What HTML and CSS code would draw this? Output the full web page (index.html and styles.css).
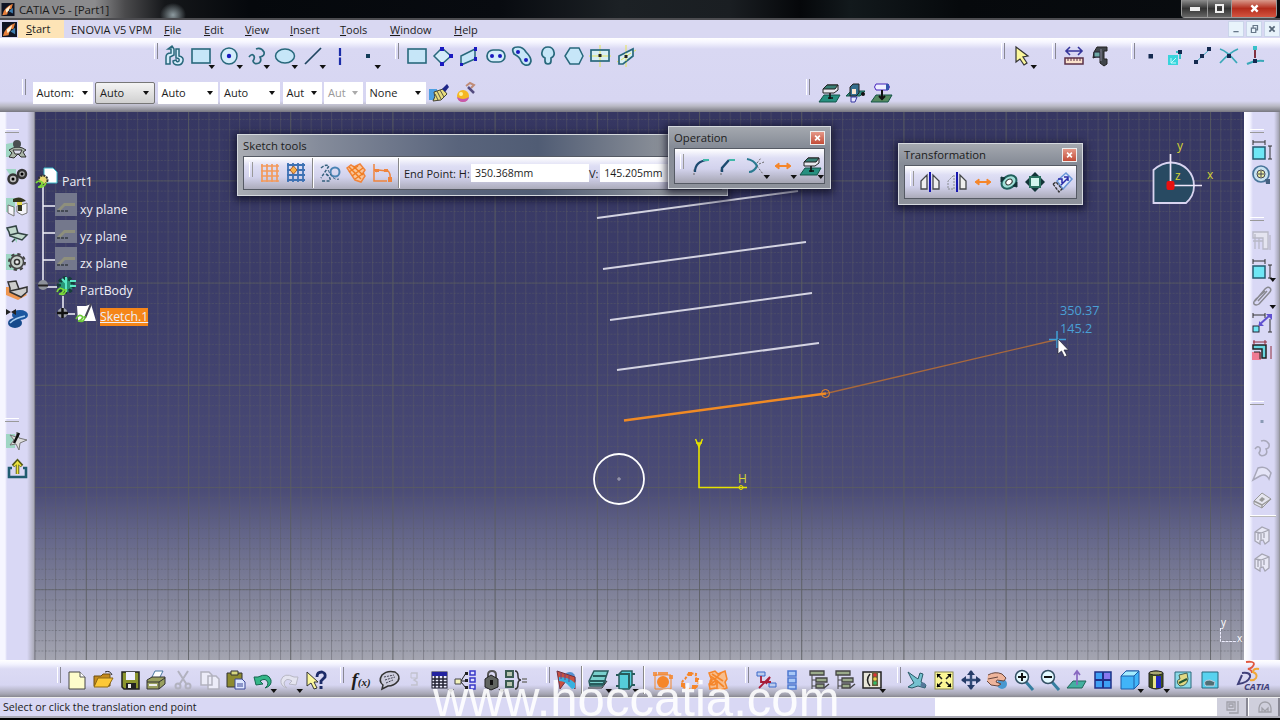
FILE: index.html
```html
<!DOCTYPE html>
<html>
<head>
  <meta charset="utf-8">
  <title>CATIA V5 - [Part1]</title>
  <link rel="stylesheet" href="styles.css">
</head>
<body>

  <!-- shared icons -->
  <svg class="defs" width="0" height="0">
    <defs>
      <path id="drop" d="M19.5 21h6.5l-3.2 4z" fill="#111"/>
      <g id="catia"><rect width="16" height="16" fill="#101524"/><path d="M1 15Q3 5 14 1L12 8Q9 5 7 14z" fill="#e8803a"/><path d="M5 8L11 3l-2 6-3 3z" fill="#fff3da"/><path d="M9 10l5-4v7z" fill="#3e7eb0"/></g>
      <g id="gear"><circle cx="12" cy="12" r="8" fill="none" stroke="#444" stroke-width="2" stroke-dasharray="3.300 3"/><circle cx="12" cy="12" r="6.500" fill="#c8d0cc" stroke="#444" stroke-width="1.500"/><circle cx="12" cy="12" r="2.500" fill="#eee" stroke="#333" stroke-width="1.500"/></g>
      <g id="cutplane"><path d="M2 21L7 14h16l-4 7z" fill="#279080" stroke="#145548"/><path d="M6 8l4-4h11v5l-4 3H6z" fill="#e8e8ee" stroke="#222"/><path d="M6 8l4-4h11l-3 4z" fill="#397f75" stroke="#222"/><path d="M13 12v6m-2-1h5" stroke="#111" stroke-width="1.6"/></g>
      <g id="dim"><rect x="3" y="9" width="12" height="12" fill="#6ee6f5" stroke="#265b70" stroke-width="1.500"/><path d="M3 4h12M3 2v5M15 2v5M20 8v13M18 8h4M18 21h4" stroke="#333" fill="none"/></g>
      <g id="mirror"><path d="M9 5v14H3v-8zM15 5v14h6v-8z" fill="#eee" stroke="#44474a" stroke-width="1.3"/><path d="M12 2v20" stroke="#1818b0" stroke-width="2"/></g>
      <g id="move" fill="#f5862a" stroke="#f5862a"><path d="M5 12h14" stroke-width="2"/><path d="M4 12l4-3v6zM20 12l-4-3v6z"/></g>
      <g id="solid" fill="#e8e8f5" stroke="#a5a5b2" stroke-width="1.3"><path d="M5 9l7-5 7 3v11l-4 3-2-4-3 1v3l-5-3z"/><path d="M8 10v7M11 11v6M14 10v5M5 9l6 1 8-3" fill="none"/></g>
      <g id="tree" fill="none" stroke="#444"><path d="M5 4v17M5 12h6M5 18h6"/><path d="M3 3h14v4H3zM9 10h11v4H9zM9 16h8v4H9z" fill="#9aaa8a" stroke-width="1.300"/><path d="M17 20l5-4" stroke-width="1.500"/></g>
    </defs>
  </svg>

  <div class="app">

    <div class="titlebar">
      <svg class="logo" viewBox="0 0 16 16"><use href="#catia"/></svg>
      <span class="caption">CATIA V5 - [Part1]</span>
      <div class="winbtns">
        <b class="min"><i></i></b><b class="max"><i></i></b>
        <b class="close"><svg viewBox="0 0 10 10"><path d="M1.500 1.500l7 7M8.500 1.500l-7 7" stroke="#fff" stroke-width="2.600"/></svg></b>
      </div>
    </div>

    <div class="menubar">
      <svg class="logo" viewBox="0 0 16 16"><use href="#catia"/></svg>
      <span class="start"><u>S</u>tart</span>
      <span class="m-enovia">ENOVIA V5 VPM</span>
      <span class="m-file"><u>F</u>ile</span>
      <span class="m-edit"><u>E</u>dit</span>
      <span class="m-view"><u>V</u>iew</span>
      <span class="m-insert"><u>I</u>nsert</span>
      <span class="m-tools"><u>T</u>ools</span>
      <span class="m-window"><u>W</u>indow</span>
      <span class="m-help"><u>H</u>elp</span>
      <div class="docbtns">
        <svg viewBox="0 0 16 16"><path d="M5 11h6" stroke="#678" stroke-width="1.5"/></svg>
        <svg viewBox="0 0 16 16"><path d="M5 7h5v5H5zM7 7V4h5v5h-2" fill="none" stroke="#678" stroke-width="1.4"/></svg>
        <svg viewBox="0 0 16 16"><path d="M5 5l6 6M11 5l-6 6" stroke="#567" stroke-width="2"/></svg>
      </div>
    </div>

    <div class="toolbars">
      <div class="row row1">
        <div class="group profile">
          <svg viewBox="0 0 24 24"><path d="M4 20v-7q0-4 5-4V5H6l4-3 2 3v6l-4 2v7zM14 5h3v7q5 1 4 5-1 4-5 4-5 0-5-4l3-1q1 3 3 1 1-3-3-3z" fill="#d4ecfa" stroke="#28687c" stroke-width="1.500"/></svg>
          <svg viewBox="0 0 24 24"><rect x="3" y="5" width="18" height="14" fill="#c6e6f8" stroke="#28687c" stroke-width="1.6"/><use href="#drop"/></svg>
          <svg viewBox="0 0 24 24"><circle cx="12" cy="12" r="8" fill="#d4ecfa" stroke="#28687c" stroke-width="1.5"/><circle cx="12" cy="12" r="2.200" fill="#1a1ac0"/><use href="#drop"/></svg>
          <svg viewBox="0 0 24 24"><path d="M5 13q3-4 5-1 1 2-1 5 1 4 6 2 3-2 1-6 5-1 4-5-3-5-8-3" fill="none" stroke="#28687c" stroke-width="1.700"/><use href="#drop"/></svg>
          <svg viewBox="0 0 24 24"><ellipse cx="13" cy="12" rx="9.500" ry="7" fill="#c6e6f8" stroke="#28687c" stroke-width="1.5"/><use href="#drop"/></svg>
          <svg viewBox="0 0 24 24"><path d="M5 20L21 4" stroke="#1f4560" stroke-width="1.7"/><use href="#drop"/></svg>
          <svg viewBox="0 0 24 24"><path d="M13 4v17" stroke="#1c2da8" stroke-width="2.200" stroke-dasharray="8 1.500"/></svg>
          <svg viewBox="0 0 24 24"><rect x="11" y="10" width="4" height="4" fill="#123c58"/><use href="#drop"/></svg>
        </div>
        <div class="group shapes">
          <svg viewBox="0 0 24 24"><rect x="3" y="5" width="18" height="14" fill="#c6e6f8" stroke="#28687c" stroke-width="1.600"/></svg>
          <svg viewBox="0 0 24 24"><path d="M11 4l9 8-9 8-8-8z" fill="#d4ecfa" stroke="#28687c" stroke-width="1.500"/><path d="M9 3h4v4H9zM18 10h4v4h-4zM9 18h4v4H9z" fill="#1a1ac0"/></svg>
          <svg viewBox="0 0 24 24"><path d="M4 12l14-7v10L4 21z" fill="#c6e6f8" stroke="#28687c" stroke-width="1.500"/><path d="M17 3h3v4h-3zM17 13h3v4h-3zM3 19h3v3H3z" fill="#1a1ac0"/></svg>
          <svg viewBox="0 0 24 24"><rect x="3" y="6" width="18" height="12" rx="6" fill="#d4ecfa" stroke="#28687c" stroke-width="1.700"/><circle cx="8" cy="12" r="2" fill="#1a1ac0"/><circle cx="16" cy="12" r="2" fill="#1a1ac0"/></svg>
          <svg viewBox="0 0 24 24"><path d="M4 10Q0 3 8 3q5 0 8 5 5 5 5 9-1 5-6 4-3-1-4-4-1-4-7-7z" fill="#c6e6f8" stroke="#28687c" stroke-width="1.700"/><circle cx="8" cy="8" r="2" fill="#1a1ac0"/><circle cx="16" cy="16" r="2" fill="#1a1ac0"/></svg>
          <svg viewBox="0 0 24 24"><path d="M9 14Q5 12 6 8q1-5 6-5t6 5q1 4-3 6v3q0 3-3 3t-3-3z" fill="#c6e6f8" stroke="#28687c" stroke-width="1.700"/></svg>
          <svg viewBox="0 0 24 24"><path d="M8 4h9l4 8-4 8H8l-5-8z" fill="#c6e6f8" stroke="#28687c" stroke-width="1.500"/></svg>
          <svg viewBox="0 0 24 24"><path d="M12 1v22M1 12h22" stroke="#e4e458"/><rect x="3" y="6" width="18" height="11" fill="#d8eef4" stroke="#28687c" stroke-width="1.700"/><path d="M12 7v9M4 12h16" stroke="#e4e458"/><rect x="10.500" y="10" width="3" height="3" fill="#222"/></svg>
          <svg viewBox="0 0 24 24"><path d="M12 1v22M3 18L22 6" stroke="#e4e458"/><path d="M5 12l14-7v7L9 20H5z" fill="#d8eef4" stroke="#28687c" stroke-width="1.700"/><path d="M12 9v8M7 16l10-7" stroke="#e4e458"/><rect x="10.500" y="11" width="3" height="3" fill="#222"/></svg>
        </div>
        <div class="group select-tool">
          <svg viewBox="0 0 24 24"><path d="M5 3v15l4-3 4 6 3-2-4-6 5-1z" fill="#fbf79c" stroke="#333" stroke-width="1.200"/><use href="#drop"/></svg>
        </div>
        <div class="group measure">
          <svg viewBox="0 0 24 24"><path d="M4 7h16M8 3L4 7l4 4M16 3l4 4-4 4" fill="none" stroke="#35359a" stroke-width="1.600"/><rect x="3" y="14" width="18" height="6" fill="#fae2cc" stroke="#5a3048" stroke-width="1.500"/><path d="M6 14v3M9 14v3M12 14v3M15 14v3M18 14v3" stroke="#5a3048"/></svg>
          <svg viewBox="0 0 24 24"><path d="M8 3h10v4h-3v8h3v5l-3 2-4-3v-6H7l-3 1 1-6z" fill="#40454a" stroke="#222"/><path d="M5 8h6v5H5z" fill="#6da7a5" stroke="#223"/><path d="M12 5v12" stroke="#889"/></svg>
        </div>
        <div class="group points">
          <svg viewBox="0 0 24 24"><rect x="9.500" y="10" width="4.500" height="4.500" fill="#142a50"/></svg>
          <svg viewBox="0 0 24 24"><rect x="3" y="11" width="10" height="10" fill="#38d4dc"/><path d="M6 14v5h5M6 19l5-5" stroke="#c4fcfc" fill="none"/><path d="M11 8h4v7" stroke="#38bfc8" fill="none" stroke-width="2"/><rect x="13" y="6" width="4" height="4" fill="#142a50"/></svg>
          <svg viewBox="0 0 24 24"><path d="M4 19L19 5" stroke="#38a8c0"/><path d="M3 16h4v4H3zM9 10h4v4H9zM16 3h4v4h-4z" fill="#142a50"/></svg>
          <svg viewBox="0 0 24 24"><path d="M3 5q7 2 17 14M21 5Q13 8 3 19" fill="none" stroke="#38a8b8" stroke-width="1.700"/><rect x="10" y="10" width="4" height="4" fill="#142a50"/></svg>
          <svg viewBox="0 0 24 24"><path d="M12 5v9" stroke="#803040" stroke-width="2"/><path d="M4 20q8-4 17-3" fill="none" stroke="#38a8b8" stroke-width="2"/><rect x="10" y="2" width="4" height="4" fill="#38c0c8"/><rect x="10" y="15" width="4" height="4" fill="#142a50"/></svg>
        </div>
      </div>

      <div class="row row2">
        <div class="group graphic">
          <div class="combo wide auto"><span>Autom:</span></div>
          <div class="combo wide focus"><span>Auto</span></div>
          <div class="combo wide"><span>Auto</span></div>
          <div class="combo wide"><span>Auto</span></div>
          <div class="combo narrow"><span>Aut</span></div>
          <div class="combo narrow disabled"><span>Aut</span></div>
          <div class="combo wide none"><span>None</span></div>
          <svg viewBox="0 0 24 24"><path d="M2 8h8v11H2z" fill="#4d9fe2"/><path d="M6 20q3-4 1-9l9-3 4 5-6 6z" fill="#e6db7c" stroke="#443"/><path d="M10 10l4 8M13 9l4 7M8 13l3 6" stroke="#554"/><path d="M15 8l5-5 2 3-4 5z" fill="#1e2688"/></svg>
          <svg viewBox="0 0 24 24"><circle cx="9" cy="15" r="6" fill="#f5b722"/><path d="M3 16q6 4 12 0-1 5-6 5t-6-5z" fill="#c557b0"/><circle cx="7" cy="13" r="2" fill="#fff2a0"/><path d="M12 5l4-3 4 2-3 3" fill="none" stroke="#c08c78" stroke-width="2"/><path d="M14 6l6 6" fill="none" stroke="#544c80" stroke-width="2.500"/></svg>
        </div>
        <div class="group cut">
          <svg viewBox="0 0 24 24"><use href="#cutplane"/></svg>
          <svg viewBox="0 0 24 24"><path d="M3 15l5-5h14l-5 5z" fill="#2f8a80" stroke="#145548"/><path d="M7 6l3-3h6v9l-3 3H7z" fill="#346e8c" stroke="#222"/><path d="M9 8h4v5H9z" fill="#f9e5d0"/><path d="M8 16v5h4l2-5z" fill="#e5e5ff" stroke="#3434a0"/><circle cx="20" cy="13" r="2" fill="#111"/></svg>
          <svg viewBox="0 0 24 24"><path d="M2 21l5-7h16l-4 7z" fill="#558a60" stroke="#145548"/><path d="M7 3h12q3 3 0 6H7Q4 6 7 3z" fill="#eef" stroke="#42b"/><path d="M17 3h3v6h-3z" fill="#35a"/><path d="M13 9v9M10 15l3 3 3-3" stroke="#111" fill="none" stroke-width="2"/></svg>
        </div>
      </div>
    </div>

    <div class="main">
      <div class="side left">
        <div class="vgroup left-a">
          <svg viewBox="0 0 24 24"><path d="M1 7l10-2v15H1z" fill="#9fd6c4"/><path d="M4 13q9-6 17 0l-3 2 3 5h-5l-3-3-4 4-5-1 3-4z" fill="#aab5a8" stroke="#333"/><circle cx="12" cy="7" r="4" fill="#4a4f50"/><path d="M8 13h9l-2 4h-5z" fill="#dde" stroke="#333"/></svg>
          <svg viewBox="0 0 24 24"><path d="M1 4h10v15z" fill="#9fd6c4"/><circle cx="8" cy="14" r="4.500" fill="#bbb" stroke="#333" stroke-width="2.500"/><circle cx="17" cy="9" r="4" fill="#aaa" stroke="#333" stroke-width="2.500"/><circle cx="8" cy="14" r="1.500"/><circle cx="17" cy="9" r="1.500"/></svg>
          <svg viewBox="0 0 24 24"><path d="M1 4h9v14H1z" fill="#9fd6c4"/><path d="M3 11l6 2v9l-6-3zM12 12l10-3v10l-5 2-5-3z" fill="#f3f3f8" stroke="#777"/><path d="M8 5q7-4 13 2l-4 1v9h-4V8L8 8z" fill="#33351f"/><path d="M12 8h5v3h-5z" fill="#e4d850"/></svg>
          <svg viewBox="0 0 24 24"><path d="M1 7h11v14z" fill="#9fd6c4"/><path d="M2 6l9-2 2 7 9 2-5 5-12-4-1-4z" fill="#c0d8cc" stroke="#344" stroke-width="1.500"/><path d="M5 13l8-2M10 17l-3 3" stroke="#344" stroke-width="1.500"/></svg>
          <svg viewBox="0 0 24 24"><path d="M1 4h12v16H1z" fill="#9fd6c4"/><use href="#gear"/></svg>
          <svg viewBox="0 0 24 24"><path d="M1 9h12l9 8-9 5L1 17z" fill="#ee9650"/><path d="M3 4l8-1 3 8 8-2v5l-6 5-11-5v-4z" fill="#ccc" stroke="#333" stroke-width="1.500"/><path d="M5 13l9-2" stroke="#333" stroke-width="1.500"/></svg>
          <svg viewBox="0 0 24 24"><ellipse cx="15" cy="9" rx="8" ry="5" fill="#1b57a0"/><ellipse cx="10" cy="17" rx="7" ry="5" fill="#164a8c"/><path d="M5 17q5-5 15-7" stroke="#a7cdf0" fill="none" stroke-width="1.500"/><path d="M1 3v6l5-3zM11 3v6L6 6z" fill="#222"/></svg>
        </div>
        <div class="vgroup left-b">
          <svg viewBox="0 0 24 24"><path d="M1 5h9v14H1z" fill="#9fd6c4"/><path d="M12 3l2 6 8 2-7 3-1 7-3-6-6 1 4-5-4-5 6 2z" fill="#ddd" stroke="#777"/><path d="M9 14l5-10" stroke="#111" stroke-width="2.500"/></svg>
          <svg viewBox="0 0 24 24"><path d="M7 11H4v9h17v-9h-3" fill="none" stroke="#205c70" stroke-width="2.600"/><path d="M12.500 17V6M8 9l4.500-5L17 9" fill="none" stroke="#555a18" stroke-width="3.500"/><path d="M12.500 17V6M9 9l3.500-4L16 9" fill="none" stroke="#eee33e" stroke-width="1.700"/></svg>
        </div>
      </div>

      <div class="viewport">
        <svg class="scene" viewBox="35 112 1209 548">
          <defs>
            <pattern id="minor" x="699" y="487" width="10.220" height="10.220" patternUnits="userSpaceOnUse">
              <path d="M0 0.500h10.220" stroke="#5a5c64" stroke-dasharray="2 1.400" stroke-opacity=".5"/>
              <path d="M0.500 0v10.220" stroke="#5a5c64" stroke-opacity=".45"/>
            </pattern>
            <pattern id="major" x="699" y="487" width="102.200" height="102.200" patternUnits="userSpaceOnUse">
              <path d="M0 0.500h102.200M0.500 0v102.200" stroke="#595d5e" stroke-opacity=".65"/>
            </pattern>
          </defs>
          <rect x="35" y="112" width="1209" height="548" fill="url(#minor)"/>
          <rect x="35" y="112" width="1209" height="548" fill="url(#major)"/>

          <!-- sketch geometry -->
          <path d="M597 218L798 191M603 269L806 242M610 320L812 293M617 370L819 343" stroke="#d4d4e2" stroke-width="2"/>
          <path d="M624 420.500L826 393.500" stroke="#f08a24" stroke-width="2.400"/>
          <path d="M826 393.500L1057 339.500" stroke="#a8683c" stroke-width="1.300"/>
          <circle cx="825.500" cy="393.500" r="4" fill="none" stroke="#f08a24"/>
          <circle cx="619" cy="479" r="25" fill="none" stroke="#fff" stroke-width="1.800"/>
          <path d="M617 479h4M619 477v4" stroke="#aab"/>

          <!-- H / V axes -->
          <g stroke="#e6e200" fill="none">
            <path d="M699 443V487.500H747" stroke-width="1.600"/>
            <path d="M695.500 439l3.500 8 3.500-8M696 443h6" stroke-width="1.500"/>
            <circle cx="741" cy="487.500" r="2"/>
          </g>
          <text class="axis" x="738" y="483">H</text>

          <!-- cursor and point value -->
          <text class="coord" x="1060" y="315">350.37</text>
          <text class="coord" x="1060" y="333">145.2</text>
          <path d="M1057 331v17M1049 339.500h17" stroke="#3fa0d8" stroke-width="1.500"/>
          <path d="M1058 339v15l3.500-3 3 6 2.500-1.500-3-5.500h4.500z" fill="#fff" stroke="#223" stroke-width=".7"/>

          <!-- compass -->
          <path d="M1153.500 203V170Q1162 162.500 1171 162.500A23 23 0 0 1 1194 186Q1194 196 1186 203z" fill="#284a62" stroke="#d9d4f0" stroke-width="1.800"/>
          <path d="M1170.500 154v31.500H1202" stroke="#efe6fa" stroke-width="1.700" fill="none"/>
          <rect x="1166.500" y="181" width="8" height="9" rx="2" fill="#e81010"/>
          <text class="axis" x="1177" y="150">y</text>
          <text class="axis" x="1175" y="180">z</text>
          <text class="axis" x="1207" y="179">x</text>

          <path d="M1220.500 628V641.500H1236" stroke="#eef" fill="none" stroke-dasharray="3 .7"/>
          <text class="corner" x="1221" y="626">y</text>
          <text class="corner" x="1237" y="642">x</text>

          <!-- specification tree lines and nodes -->
          <path d="M43 185V284M43 206h12M43 233h12M43 260h12M43 287h14M63 296v17M63 314h12" stroke="#f2f2fa" stroke-width="1.500" fill="none"/>
          <path d="M44 168h9l4 4v11H44z" fill="#fff" stroke="#38b8c8"/>
          <circle cx="43" cy="180" r="4.500" fill="#e8d870" stroke="#333" stroke-width="2" stroke-dasharray="2 1"/>
          <path d="M36 183q3-4 7 0-3 4-5 4 6 1 8-4" fill="none" stroke="#7cdb38" stroke-width="1.700"/>
          <g id="plane"><rect x="55" y="193" width="22" height="23" fill="#74788c"/><path d="M57 210l7-7h11v3H65l-5 5z" fill="#8e8f7c"/><path d="M57 211h12" stroke="#444a54" stroke-width="2" stroke-dasharray="3 1"/></g>
          <use href="#plane" y="27"/>
          <use href="#plane" y="54"/>
          <circle cx="43" cy="285" r="5" fill="#8d929b"/><path d="M38 285.500h10" stroke="#222" stroke-width="2"/>
          <circle cx="66" cy="285" r="7" fill="#299778" stroke="#153e38" stroke-width="4" stroke-dasharray="3 2"/>
          <path d="M66 277v15M70 281h6M70 286h6M62 279l4 4" stroke="#5be8c6" stroke-width="2"/>
          <path d="M57 292q2-6 7-2-2 4-5 4 7 2 7-5" fill="none" stroke="#7cdb38" stroke-width="1.700"/>
          <circle cx="62.500" cy="313" r="5" fill="#9b9fa8"/><path d="M57 313h11M62.500 308v10" stroke="#111" stroke-width="2.500"/>
          <path d="M77 306h9l5-2 5 17H78z" fill="#fff"/><path d="M85 318l6-14" stroke="#445" stroke-width="2"/>
          <path d="M76 319q3-6 7-2-2 4-5 4 7 2 7-5" fill="none" stroke="#6bc738" stroke-width="1.700"/>
        </svg>

        <ul class="spectree">
          <li class="part">Part1</li>
          <li>xy plane</li>
          <li>yz plane</li>
          <li>zx plane</li>
          <li>PartBody</li>
          <li class="sketch"><span>Sketch.1</span></li>
        </ul>

        <div class="float sketchtools">
          <div class="float-title">Sketch tools</div>
          <div class="float-body">
            <svg viewBox="0 0 24 24"><path d="M4 3v18M9 3v18M14 3v18M19 3v18M3 5h18M3 10h18M3 15h18M3 20h18" stroke="#f39a5c" stroke-width="1.700"/></svg>
            <svg viewBox="0 0 24 24"><path d="M4 2v19M9 2v19M14 2v19M19 2v19M3 4h18M3 9h18M3 14h18M3 19h18" stroke="#3e72b4" stroke-width="1.800"/><path d="M9.500 5l3.500 4-3.500 4L6 9z" fill="#f3b04a" stroke="#b0602c"/></svg>
            <i class="sep"></i>
            <svg viewBox="0 0 24 24"><path d="M3 7q4-4 8-2L3 17M8 13q5 3 4 7l-8 0" fill="none" stroke="#34607c" stroke-width="1.500" stroke-dasharray="3 1.500"/><circle cx="17" cy="11" r="4.500" fill="none" stroke="#4a84b4" stroke-width="2"/><path d="M10 9q5 11 11 9" fill="none" stroke="#34607c" stroke-dasharray="3 1.500"/></svg>
            <svg viewBox="0 0 24 24"><path d="M3 7l4-3 3 2 6-3 5 6-2 3 2 3-4 6-6-2z" fill="#f9c59a" stroke="#f0843c" stroke-width="1.500"/><path d="M5 6l12 12M9 5l10 9M5 11l9-6M8 15l11-8M11 18l9-6" stroke="#f07c20" stroke-width="1.500"/></svg>
            <svg viewBox="0 0 24 24"><path d="M4 3v5l3 3M4 8v12h13M8 9l9 1M17 9q4 3 3 9" fill="none" stroke="#f0843c" stroke-width="1.500"/><path d="M5 8h4v3H5zM14 8h4v3h-4zM18 16h4v5h-4z" fill="#f0843c"/></svg>
            <i class="sep"></i>
            <label>End Point: H:</label>
            <span class="field">350.368mm</span>
            <label>V:</label>
            <span class="field last">145.205mm</span>
          </div>
        </div>

        <div class="float operation">
          <div class="float-title">Operation<b><svg viewBox="0 0 10 10"><path d="M2 2l6 6M8 2L2 8" stroke="#fff" stroke-width="2"/></svg></b></div>
          <div class="float-body">
            <svg viewBox="0 0 24 24"><path d="M4 21V15" stroke="#666" stroke-dasharray="2 1.500"/><path d="M5 18Q5 7 18 6" fill="none" stroke="#1c4a70" stroke-width="2.200"/><path d="M13 6h6" stroke="#40b8a8" stroke-width="2"/></svg>
            <svg viewBox="0 0 24 24"><path d="M4 21V15" stroke="#666" stroke-dasharray="2 1.500"/><path d="M5 18v-4l7-8" fill="none" stroke="#1c4a70" stroke-width="2.400"/><path d="M12 6h6" stroke="#40b8a8" stroke-width="2"/></svg>
            <svg viewBox="0 0 24 24"><path d="M3 5q7 1 10 7-3 6-8 6" fill="none" stroke="#2a7a90" stroke-width="2.200"/><path d="M13 9l4-5M13 12l6 8M15 10l5-2" stroke="#666" stroke-dasharray="2 1.500"/><use href="#drop"/></svg>
            <svg viewBox="0 0 24 24"><use href="#move"/><use href="#drop"/></svg>
            <svg viewBox="0 0 24 24"><use href="#cutplane"/><use href="#drop"/></svg>
          </div>
        </div>

        <div class="float transformation">
          <div class="float-title">Transformation<b><svg viewBox="0 0 10 10"><path d="M2 2l6 6M8 2L2 8" stroke="#fff" stroke-width="2"/></svg></b></div>
          <div class="float-body">
            <svg viewBox="0 0 24 24"><use href="#mirror"/></svg>
            <svg viewBox="0 0 24 24"><path d="M9 5v14H3v-8z" fill="none" stroke="#888c90" stroke-dasharray="2 1"/><path d="M15 5v14h6v-8z" fill="#eee" stroke="#44474a" stroke-width="1.300"/><path d="M12 2v20" stroke="#1818b0" stroke-width="2"/></svg>
            <svg viewBox="0 0 24 24"><use href="#move"/></svg>
            <svg viewBox="0 0 24 24"><ellipse cx="12" cy="12" rx="8" ry="6" fill="#a0e0d8" stroke="#20605c" stroke-width="2" transform="rotate(-35 12 12)"/><path d="M4 12V7l4 1zM20 12v5l-4-1z" fill="#123438" stroke="#123438"/><ellipse cx="12" cy="12" rx="3.500" ry="2.500" fill="#fff" stroke="#333" transform="rotate(-35 12 12)"/></svg>
            <svg viewBox="0 0 24 24"><rect x="7" y="7" width="10" height="10" fill="#d2f5ee" stroke="#2a7060" stroke-width="2"/><path d="M12 2l4 4H8zM12 22l4-4H8zM2 12l4-4v8zM22 12l-4-4v8z" fill="#123438"/></svg>
            <svg viewBox="0 0 24 24"><path d="M7 11L16 3l6 6-9 10z" fill="#e0e8fa" stroke="#6a96d8" stroke-width="1.500"/><path d="M3 14l3-2 6 7-3 3z" fill="none" stroke="#333" stroke-width="1.300" stroke-dasharray="3 1"/><path d="M8 9h4v4M14 7h4v4M11 15l7-7" stroke="#2a2aa8" stroke-width="1.500" fill="none"/></svg>
          </div>
        </div>
      </div>

      <div class="side right">
        <div class="vgroup right-a">
          <svg viewBox="0 0 24 24"><use href="#dim"/></svg>
          <svg viewBox="0 0 24 24"><circle cx="11" cy="11" r="8" fill="#c8e2f0" stroke="#49759a" stroke-width="1.700"/><circle cx="11" cy="11" r="4" fill="#e8eda0" stroke="#445"/><path d="M11 8v6M8 11h6" stroke="#445"/><path d="M15 16h5v5h-4z" fill="#446080"/></svg>
        </div>
        <div class="vgroup right-b">
          <svg viewBox="0 0 24 24"><path d="M3 3h15v17h-5V9H3zM3 12h10M5 5v15M9 9v11M20 6v15" fill="#e4e4f0" stroke="#b8b8c6" stroke-width="1.300"/></svg>
          <svg viewBox="0 0 24 24"><use href="#dim"/><use href="#drop"/></svg>
          <svg viewBox="0 0 24 24"><path d="M5 17L15 5q3-3 5-1 2 2-1 5L9 20q-3 2-5 0-1-2 2-5L15 7M8 17l9-10" fill="none" stroke="#888890" stroke-width="1.500"/><use href="#drop"/></svg>
          <svg viewBox="0 0 24 24"><path d="M3 4h12M3 2v5M15 2v5M20 8v13M18 21h4" stroke="#333"/><rect x="3" y="15" width="6" height="6" fill="#6ee6f5" stroke="#223"/><path d="M9 14l10-9" stroke="#6050d0" stroke-width="2" fill="none"/><path d="M16 3h6v6zM9 15v-5l5 5z" fill="#6050d0"/></svg>
          <svg viewBox="0 0 24 24"><path d="M3 7h13v13h-4v-9H3z" fill="#68d8e0" stroke="#222" stroke-width="1.500"/><path d="M3 4h14M4 2v5M15 2v5M21 8v13" stroke="#902c3c"/><path d="M2 14h9v8H2z" fill="#ef7c94"/><path d="M4 14h6v7" fill="none" stroke="#222"/></svg>
        </div>
        <div class="vgroup right-c">
          <svg viewBox="0 0 24 24"><rect x="10.500" y="10" width="3" height="3" fill="#8a9ab4"/></svg>
          <svg viewBox="0 0 24 24"><path d="M5 13q3-4 5-1 1 2-1 5 1 4 6 2 3-2 1-6 4-1 3-5-3-5-8-3" fill="none" stroke="#a8a8ba" stroke-width="1.500"/></svg>
          <svg viewBox="0 0 24 24"><path d="M3 18L8 6q8-3 13 5l-2 6q-3-6-9-3z" fill="#e5e5f7" stroke="#a8a8ba" stroke-width="1.500"/></svg>
          <svg viewBox="0 0 24 24"><path d="M4 12l8-8 9 6-9 9-8-4z" fill="#e5e5ef" stroke="#999"/><path d="M12 19v-3l-8-4M12 16l9-6" stroke="#999" stroke-width="1.500" fill="none"/><path d="M12 8l3 2-3 3-3-2z" fill="#999"/></svg>
          <i class="hsep"></i>
          <svg viewBox="0 0 24 24"><use href="#solid"/></svg>
          <svg viewBox="0 0 24 24"><use href="#solid"/></svg>
        </div>
      </div>
    </div>

    <div class="bottombar">
      <div class="group standard">
        <svg viewBox="0 0 24 24"><path d="M4 4h11l5 5v12H4z" fill="#fdfccb" stroke="#444"/><path d="M15 4v5h5" fill="#fff" stroke="#555"/></svg>
        <svg viewBox="0 0 24 24"><path d="M3 8h7l2-2h7v12H3z" fill="#c48a1c" stroke="#6d4c10"/><path d="M3 19l4-9h15l-5 9z" fill="#fcc838" stroke="#8d6814"/><path d="M14 4q5-2 7 3" fill="none" stroke="#222"/></svg>
        <svg viewBox="0 0 24 24"><path d="M4 4h17v17H6l-2-2z" fill="#8b942e" stroke="#222" stroke-width="1.500"/><path d="M8 4h9v8H8z" fill="#eef"/><path d="M8 15h10v6H8z" fill="#222"/><path d="M10 16h3v4h-3z" fill="#eee"/></svg>
        <svg viewBox="0 0 24 24"><path d="M7 11l4-8h8l-4 8z" fill="#fff" stroke="#4878a0"/><path d="M3 12l5-3h13v7l-6 5H3z" fill="#9aa060" stroke="#333"/><path d="M3 14h12l6-4M15 14v7" stroke="#333" fill="none"/><path d="M5 17h8" stroke="#eee" stroke-width="2"/></svg>
        <svg viewBox="0 0 24 24"><path d="M7 3l9 14M17 3L8 17" stroke="#b2b2bf" stroke-width="2"/><circle cx="7" cy="18" r="2.500" fill="none" stroke="#b2b2bf" stroke-width="2"/><circle cx="17" cy="18" r="2.500" fill="none" stroke="#b2b2bf" stroke-width="2"/></svg>
        <svg viewBox="0 0 24 24"><path d="M3 4h8l3 3v10H3zM10 8h8l3 3v10H10z" fill="#ececf8" stroke="#b2b2bf" stroke-width="1.500"/></svg>
        <svg viewBox="0 0 24 24"><path d="M3 5h15v14H3z" fill="#8d8a30" stroke="#333"/><path d="M7 3h7v4H7z" fill="#d7d680" stroke="#333"/><path d="M11 11h7l3 3v7H11z" fill="#dde6ff" stroke="#3a4696"/><path d="M13 16h6M13 18h6" stroke="#3a4696"/></svg>
        <svg viewBox="0 0 24 24"><path d="M3 9l2 8 7-1-3-3q6-4 8 2 0 3-3 5 7-2 6-8-3-8-13-3z" fill="#34b688" stroke="#176650"/><use href="#drop"/></svg>
        <svg viewBox="0 0 24 24"><path d="M21 9l-2 8-7-1 3-3q-6-4-8 2 0 3 3 5-7-2-6-8 3-8 13-3z" fill="#e4e4f0" stroke="#b8b8c4"/><use href="#drop"/></svg>
        <svg viewBox="0 0 24 24"><path d="M3 4v14l4-3 3 6 3-1-3-6h4z" fill="#fbf79c" stroke="#333"/><path d="M13 9q0-5 5-5 4 1 3 5l-4 4v3" fill="none" stroke="#1c2b68" stroke-width="2.800"/><rect x="15.500" y="18" width="3" height="3" fill="#1c2b68"/></svg>
      </div>
      <div class="group knowledge">
        <span class="fx">f<small>(x)</small></span>
        <svg viewBox="0 0 24 24"><path d="M6 17q-5-4-1-10 5-5 13-3 6 4 3 9-4 5-10 5l-6 3z" fill="#ccd" stroke="#333" stroke-width="1.500"/><path d="M7 9l10-2M8 12l10-3M9 15l7-3" stroke="#445" stroke-dasharray="2 1"/></svg>
        <svg viewBox="0 0 24 24"><path d="M9 5h6v5l-3 2 3 2v3H9" fill="none" stroke="#c2c2ce" stroke-width="1.500"/><path d="M9 5v5h5" fill="none" stroke="#c2c2ce"/></svg>
        <svg viewBox="0 0 24 24"><rect x="4" y="4" width="15" height="16" fill="#eef" stroke="#223"/><path d="M4 4h15v4H4z" fill="#2222a0"/><path d="M7 8v12M11 8v12M15 8v12M4 11h15M4 14h15M4 17h15" stroke="#223" stroke-width="1.500"/><use href="#drop"/></svg>
        <svg viewBox="0 0 24 24"><path d="M8 13l5-8M8 13h6M8 14l5 6" stroke="#222"/><path d="M2 11h6v5H2z" fill="#f3f3bb" stroke="#444"/><path d="M17 3h5v4h-5zM17 10h5v4h-5zM17 17h5v4h-5z" fill="#ddf" stroke="#3838c8" stroke-width="1.500"/><path d="M12 4h3v3h-3zM12 11h3v3h-3zM12 18h3v3h-3z" fill="#222"/></svg>
        <svg viewBox="0 0 24 24"><path d="M9 11V7q0-4 4-4t4 4v4" fill="none" stroke="#555" stroke-width="2"/><path d="M6 11l6-4 7 4v8l-7 3-6-3z" fill="#606460" stroke="#222"/><path d="M11 12h3v5h-3z" fill="#111"/><use href="#drop"/></svg>
        <svg viewBox="0 0 24 24"><path d="M2 3h7v6H2zM2 13h7v6H2z" fill="#b8c4b0" stroke="#3b5a50" stroke-width="2"/><path d="M11 3q3 0 3 5 0 4 3 4-3 0-3 4 0 5-3 5" fill="none" stroke="#333" stroke-width="1.500"/><path d="M18 11h5M18 14h5" stroke="#777" stroke-width="1.500"/></svg>
      </div>
      <div class="group analysis">
        <svg viewBox="0 0 24 24"><path d="M12 5q9-4 10 8l-5 7z" fill="#5590d0"/><path d="M3 3l18 6v12l-4-5-5-3-6 8z" fill="#c85040" stroke="#703040"/><path d="M5 13q5 0 8 3l5 5 3-1v-5q-6-6-16-6z" fill="#38b0e0"/><path d="M7 5v6M11 6v6M15 8v6" stroke="#704080"/></svg>
        <i class="sep"></i>
        <svg viewBox="0 0 24 24"><path d="M3 13l5-10h14l-3 9-3 6H4z" fill="#79d0cd" stroke="#285b5c" stroke-width="1.500"/><path d="M7 8h13M4 13h15l-1 3H4" fill="none" stroke="#285b5c" stroke-width="2"/><path d="M2 20h14l5-7" fill="none" stroke="#333"/><use href="#drop"/></svg>
        <svg viewBox="0 0 24 24"><path d="M6 6l3-3h10v14l-3 4H6z" fill="#55cdda" stroke="#285b5c" stroke-width="1.500"/><path d="M6 6h10v14M3 7h3M3 18h3M19 6h3M19 17h3" stroke="#285b5c" fill="none" stroke-width="2"/><use href="#drop"/></svg>
        <i class="sep wider"></i>
        <svg viewBox="0 0 24 24"><circle cx="12" cy="14" r="6" fill="#f5862a"/><path d="M4 7h16v14H4z" fill="none" stroke="#f5862a"/><path d="M2 4h4v4H2zM7 4h10v3H7zM18 7h4v4h-4z" fill="#f5862a" fill-opacity=".8"/></svg>
        <svg viewBox="0 0 24 24"><path d="M5 19q-3-5 2-8l4-6 7 1q-1 5 3 8l-3 6-7 1z" fill="none" stroke="#f5862a" stroke-width="2" stroke-dasharray="3 1.500"/><path d="M10 4h4v4h-4zM17 10h4v4h-4zM3 15h4v4H3zM14 17h4v4h-4z" fill="#f5862a"/></svg>
        <svg viewBox="0 0 24 24"><path d="M4 5l6-2 3 3 7-3 2 8-2 3 2 6-7 2-5-2-5 1-1-5 3-3z" fill="#f7bd8c" stroke="#f5862a" stroke-width="1.500"/><path d="M5 8l5 3 6-6M5 17l6-5 8 7M12 12v8M7 6l11 7" stroke="#f5862a" stroke-width="1.700" fill="none"/><circle cx="8" cy="14" r="3" fill="none" stroke="#f5862a" stroke-width="1.500"/></svg>
      </div>
      <div class="group structure">
        <svg viewBox="0 0 24 24"><path d="M3 4h8v4H3zM15 15h7v4h-7z" fill="#bce" stroke="#3b68c8"/><path d="M7 8v6h10M5 20L16 9l-4 7" fill="none" stroke="#a81c38" stroke-width="1.800"/></svg>
        <svg viewBox="0 0 24 24"><path d="M8 3h8v5H8zM8 10h8v5H8zM8 17h8v4H8z" fill="#a8c8f6" stroke="#4d78d0" stroke-width="1.500"/></svg>
        <svg viewBox="0 0 24 24"><use href="#tree"/></svg>
        <svg viewBox="0 0 24 24"><use href="#tree"/></svg>
        <svg viewBox="0 0 24 24"><path d="M3 4h18v16H3z" fill="#e8e6d8" stroke="#222" stroke-width="1.500"/><path d="M10 6q-5 6 0 12" stroke="#222" fill="none" stroke-width="1.500"/><path d="M12 4h6v14h-6z" fill="#665e38"/><circle cx="15" cy="7" r="1.800" fill="#d33"/><circle cx="15" cy="11" r="1.800" fill="#ec4"/><circle cx="15" cy="15" r="1.800" fill="#3b6"/><use href="#drop"/></svg>
      </div>
      <div class="group view">
        <svg viewBox="0 0 24 24"><path d="M3 4l7 5 3 2 2-6 3 1-2 8 5 3-1 3-7-2-6 2-4-1 6-4-3-5z" fill="#75c2d0" stroke="#2a5a68"/><circle cx="18" cy="17" r="2.500" fill="#579"/></svg>
        <svg viewBox="0 0 24 24"><rect x="3" y="4" width="18" height="17" fill="#fbf795" stroke="#8a8a50"/><path d="M5 6l5 5M19 6l-5 5M5 19l5-5M19 19l-5-5" stroke="#222" stroke-width="1.500"/><path d="M5 6h4L5 10zM19 6v4l-4-4zM5 19h4l-4-4zM19 19v-4l-4 4z"/></svg>
        <svg viewBox="0 0 24 24"><path d="M12 3v18M3 12h18" stroke="#314b78" stroke-width="2.500"/><path d="M12 2l4 5H8zM12 22l4-5H8zM2 12l5-4v8zM22 12l-5-4v8z" fill="#263c68"/></svg>
        <svg viewBox="0 0 24 24"><circle cx="17" cy="16" r="5" fill="#4898d0"/><path d="M3 7q7-4 14-1l4 4-2 3-7-1-1 2 5 2-3 2-7-1-4-4" fill="#eeb49b" stroke="#67463e"/><path d="M3 11l10-2" stroke="#67463e"/></svg>
        <svg viewBox="0 0 24 24"><path d="M14 14l7 8" stroke="#357ea0" stroke-width="3"/><circle cx="10" cy="9" r="6.500" fill="#e4faff" stroke="#335064" stroke-width="1.500"/><path d="M6 9h8M10 5v8" stroke="#111" stroke-width="2"/></svg>
        <svg viewBox="0 0 24 24"><path d="M14 14l7 8" stroke="#357ea0" stroke-width="3"/><circle cx="10" cy="9" r="6.500" fill="#e4faff" stroke="#335064" stroke-width="1.500"/><path d="M6 9h8" stroke="#111" stroke-width="2"/></svg>
        <svg viewBox="0 0 24 24"><path d="M2 20l6-7h13l-4 7z" fill="#43b0a0" stroke="#216458"/><path d="M12 17V4M9 7l3-4 3 4" fill="none" stroke="#8868c0" stroke-width="1.700"/></svg>
        <svg viewBox="0 0 24 24"><path d="M4 4h16v16H4z" fill="#3ea0f5" stroke="#203088" stroke-width="1.500"/><path d="M12 4v16M4 12h16" stroke="#203088" stroke-width="2"/><path d="M13 5h6v6h-6z" fill="#8878f0"/></svg>
        <svg viewBox="0 0 24 24"><path d="M3 8l5-5h13v13l-5 5H3z" fill="#40b4f8" stroke="#1c5ca8"/><path d="M3 8l5-5h13l-5 5z" fill="#a4ecff" stroke="#1c5ca8"/><path d="M16 8v13" stroke="#1c5ca8"/><use href="#drop"/></svg>
        <svg viewBox="0 0 24 24"><path d="M5 5q7-4 14 0v14q-7 4-14 0z" fill="#42521c" stroke="#222"/><path d="M9 8h3v12H9z" fill="#e8e488"/><path d="M12 8h5v12h-5z" fill="#2028c0"/><ellipse cx="12" cy="5" rx="7" ry="2" fill="#a8a870" stroke="#222"/><use href="#drop"/></svg>
        <svg viewBox="0 0 24 24"><path d="M4 4h16v16H4z" fill="#8cdae8" stroke="#28687c"/><path d="M7 16q-2-4 2-5l-1-4 8-2 1 6q-1 7-8 7z" fill="#e0d884" stroke="#446050"/><path d="M8 15l8-4" stroke="#253" stroke-width="2"/></svg>
        <svg viewBox="0 0 24 24"><path d="M4 4h16v16H4z" fill="#58d2ef" stroke="#28687c"/><path d="M7 17q-2-5 5-5l5 2-1 4H8z" fill="#506e74" stroke="#bcd"/></svg>
      </div>
      <svg class="ds" viewBox="0 0 40 34">
        <path d="M10 2q8-1 8 2-1 4-6 5 4 1 4 4" fill="none" stroke="#e05840" stroke-width="1.800"/>
        <path d="M6 13q9-1 8 4-2 6-12 7l4-9" fill="none" stroke="#40407a" stroke-width="2"/>
        <path d="M23 9q-6-1-6 3 5 2 3 6-2 3-6 2" fill="none" stroke="#f0a838" stroke-width="2"/>
        <text x="8" y="30">CATIA</text>
      </svg>
    </div>

    <div class="statusbar">
      <span>Select or click the translation end point</span>
      <div class="powerinput"></div>
      <div class="statbtn"><svg viewBox="0 0 16 16"><path d="M2 3h8v8H2zM4 5h4v3H4zM13 2v12H4" fill="none" stroke="#a0a0a8" stroke-width="1.300"/></svg></div>
      <div class="statbtn"><svg viewBox="0 0 16 16"><path d="M2 13V9q1-6 6-6t6 6v4zM5 13V9l3 3 3-3v4" fill="none" stroke="#a0a0a8" stroke-width="1.300"/></svg></div>
    </div>

    <div class="watermark">www.hoccatia.com</div>
  </div>

</body>
</html>
```
FILE: styles.css
```css
* {
  box-sizing: border-box;
}

body {
  margin: 0;
  font: 11px "Open Sans", "Noto Sans", sans-serif;
  color: #1c1c1c;
}

svg {
  display: block;
  overflow: visible;
}

.defs {
  position: absolute;
}

.app {
  position: relative;
  width: 1280px;
  height: 720px;
  display: flex;
  flex-direction: column;
  overflow: hidden;
  background: #000;
}

/* title and menu */
.titlebar {
  height: 20px;
  display: flex;
  align-items: center;
  border-bottom: 2px solid #4c4c50;
  background: radial-gradient(ellipse 13px 12px at 173px 15px, #8e9ba0, transparent),
    linear-gradient(90deg, #8b8b8d 0, #8b8b8d 95px, #4a4a4c 125px, #15171a 165px, #05080c 250px, #080b10 500px, #1c2125 620px, #1a1e22 730px, #05070a 800px, #12191c 850px, #06090c 960px, #090c10 1280px);
}

.logo {
  width: 14px;
  height: 13px;
  margin-left: 1px;
}

.caption {
  margin-left: 4px;
  font-size: 11.500px;
  letter-spacing: -.2px;
}

.winbtns {
  margin-left: auto;
  margin-right: 3px;
  height: 18px;
  display: flex;
  border: 1px solid #999;
  border-top: 0;
  border-radius: 0 0 4px 4px;
}

.winbtns b {
  display: flex;
  align-items: center;
  justify-content: center;
  width: 26px;
  background: linear-gradient(#8d8d8d, #333 50%, #666);
  border-right: 1px solid #999;
}

.winbtns .max {
  width: 24px;
}

.winbtns .close {
  width: 44px;
  border: 0;
  background: linear-gradient(#d99a8c, #b32c1c 50%, #d35440);
}

.close svg {
  width: 9px;
  height: 9px;
}

.min i {
  width: 10px;
  height: 4px;
  background: #eee;
}

.max i {
  width: 9px;
  height: 9px;
  border: 2px solid #eee;
}

.menubar {
  height: 18px;
  display: flex;
  align-items: center;
  background: #d9d8f2;
  white-space: nowrap;
}

.menubar .logo {
  width: 17px;
  height: 15px;
}

.menubar span {
  width: 47px;
}

.menubar .start {
  width: 46px;
  height: 18px;
  line-height: 18px;
  padding-left: 8px;
  margin-right: 7px;
  background: #fde4b6;
}

.menubar .m-enovia {
  width: 93px;
}

.menubar .m-file {
  width: 40px;
}

.menubar .m-edit {
  width: 41px;
}

.menubar .m-view {
  width: 45px;
}

.menubar .m-insert {
  width: 50px;
}

.menubar .m-tools {
  width: 50px;
}

.menubar .m-window {
  width: 64px;
}

.docbtns {
  margin-left: auto;
  display: flex;
  gap: 2px;
}

.docbtns svg {
  width: 16px;
  height: 16px;
  background: #e8f3fb;
  border: 1px solid #cbd5ea;
}

/* toolbars */
.toolbars {
  height: 74px;
  background: linear-gradient(#fff 0, #f6f6ff 4px, #d9d8f3 11px, #d7d6f2 63px, #b9b9c4 68px, #777780 74px);
}

.row {
  display: flex;
}

.row1 {
  height: 36px;
}

.row2 {
  height: 38px;
}

.group {
  display: flex;
  align-items: center;
  flex-shrink: 0;
}

.group > svg, .vgroup > svg, .float-body > svg {
  width: 24px;
  height: 24px;
  flex-shrink: 0;
}

/* drag handle in front of every toolbar */
.group::before {
  content: "";
  align-self: flex-start;
  width: 2px;
  height: 16px;
  margin-top: 5px;
  border-left: 1px solid #fff;
  border-right: 1px solid #888893;
  flex-shrink: 0;
}

.profile {
  margin-left: 154px;
  gap: 3.600px;
}

.shapes {
  margin-left: 16px;
  gap: 2.200px;
}

.shapes::before {
  margin-right: 4px;
}

.select-tool {
  margin-left: 363px;
}

.select-tool::before {
  margin-right: 6px;
}

.measure {
  margin-left: 17px;
  gap: 3px;
}

.measure::before {
  margin-right: 3px;
}

.points {
  margin-left: 18px;
  gap: 2.200px;
}

.points::before {
  margin-right: 1px;
}

.graphic {
  margin-left: 22px;
  gap: 2.500px;
}

.graphic::before {
  margin-right: 4px;
}

.none + svg {
  margin-left: -1px;
}

.combo {
  display: flex;
  align-items: center;
  justify-content: space-between;
  height: 22px;
  background: #fff;
  padding: 0 5px 0 4px;
  line-height: 22px;
  white-space: nowrap;
}

.combo::after {
  content: "";
  border: 3.500px solid transparent;
  border-top: 4.500px solid #111;
  border-bottom: 0;
  flex-shrink: 0;
}

.wide {
  width: 60px;
}

.narrow {
  width: 39px;
}

.combo.focus {
  border: 1px solid #777;
  background: linear-gradient(#f4f4f4, #d0d0d0);
  border-radius: 2px;
}

.disabled {
  color: #999;
}

.disabled::after {
  border-top-color: #aaa;
}

.cut {
  margin-left: 328px;
  gap: 2px;
}

.cut::before {
  margin-right: 5px;
}

/* middle */
.main {
  height: 548px;
  display: flex;
}

.side {
  width: 35px;
  padding-left: 5px;
  background: linear-gradient(90deg, #f6f6ff 0, #f6f6ff 5px, #d9d8f5 7px, #d9d8f5 27px, #aaaab8 34px, #666670 35px);
}

.side.right {
  width: 36px;
  padding-left: 6px;
  background: linear-gradient(90deg, #fff 0, #f3f3ff 6px, #d9d8f5 9px, #d9d8f5 30px, #a4a4b4 35px, #888 36px);
}

.vgroup {
  display: flex;
  flex-direction: column;
}

.vgroup::before {
  content: "";
  width: 14px;
  height: 2px;
  border-top: 1px solid #fff;
  border-bottom: 1px solid #999;
  flex-shrink: 0;
}

.left-a {
  padding-top: 17px;
  gap: 4.200px;
}

.left-b {
  padding-top: 88px;
  gap: 4.500px;
}

.left-b::before {
  margin-bottom: 2px;
}

.right-a {
  padding-top: 17px;
  gap: 1px;
}

.right-a::before {
  margin-bottom: 4px;
}

.right-b {
  padding-top: 30px;
  gap: 3.300px;
}

.right-b::before {
  margin-bottom: 5px;
}

.right-c {
  padding-top: 39px;
  gap: 2.300px;
}

.right-c::before {
  margin-bottom: 2px;
}

.hsep {
  width: 26px;
  height: 2px;
  border-top: 1px solid #fff;
  border-bottom: 1px solid #bbb;
  margin-bottom: 4px;
}

.viewport {
  position: relative;
  width: 1209px;
  background: linear-gradient(#363762 0, #3c3d69 180px, #484975 340px, #4c4d77 380px, #65678a 425px, #84869c 490px, #a4a5b1 548px);
}

.scene {
  position: absolute;
  left: 0;
  top: 0;
  width: 1209px;
  height: 548px;
}

.axis {
  font-size: 12px;
  fill: #d4d332;
}

.coord {
  font-size: 12.700px;
  fill: #4aa0d6;
}

.corner {
  font-size: 10px;
  fill: #fff;
}

.spectree {
  position: absolute;
  left: 45px;
  top: 56px;
  margin: 0;
  padding: 0;
  list-style: none;
  font-size: 12.300px;
  line-height: 27px;
  color: #eeeef6;
}

.spectree .part {
  height: 28px;
  margin-left: -18px;
}

.spectree .sketch {
  margin-left: 20px;
  line-height: 25px;
}

.sketch span {
  display: inline-block;
  line-height: 18px;
  background: #f58618;
  text-decoration: underline;
}

/* floating toolbars */
.float {
  position: absolute;
  padding: 0 5px 5px;
  border: 1px solid #d5d9de;
  background: linear-gradient(#a4a8af, #858b96 20px, #8e929b);
  box-shadow: 0 2px 8px 2px rgba(10, 10, 30, .75);
}

.float-title {
  display: flex;
  align-items: center;
  height: 21px;
  font-size: 11.300px;
}

.float-title b {
  margin-left: auto;
  width: 15px;
  height: 14px;
  padding: 2px;
  border: 1px solid #eee;
  background: linear-gradient(#e59888, #c34c38);
}

.float-title svg {
  width: 9px;
  height: 8px;
}

.float-body {
  display: flex;
  align-items: center;
  height: 34px;
  border: 1px solid #555a64;
  background: linear-gradient(#fff, #dedef4 9px, #d2d2ec 20px, #a8a8b6 33px);
}

.float-body::before {
  content: "";
  align-self: flex-start;
  width: 2px;
  height: 15px;
  margin: 5px 5px 0 5px;
  border-left: 1px solid #fff;
  border-right: 1px solid #999;
  flex-shrink: 0;
}

.sketchtools {
  left: 202px;
  top: 22px;
  width: 491px;
  height: 62px;
  background: linear-gradient(90deg, #a9acb3 0, #858c9b 80px, #59647c 220px, #505c74 300px, #8d929a 430px);
  white-space: nowrap;
}

.sketchtools .sep {
  height: 30px;
  margin: 0 4px;
}

.sketchtools .float-body > svg + svg {
  margin-left: 2px;
}

.sep {
  width: 2px;
  height: 28px;
  border-left: 1px solid #888;
  border-right: 1px solid #fff;
}

.field {
  width: 118px;
  height: 18px;
  line-height: 18px;
  background: #fff;
  padding-left: 4px;
  margin-left: 1px;
  font-size: 10.500px;
}

.field.last {
  margin-left: 2px;
}

.operation {
  left: 633px;
  top: 14px;
  width: 163px;
  height: 63px;
}

.operation .float-body {
  height: 36px;
  gap: 3px;
}

.operation .float-body::before {
  margin-right: 3px;
}

.transformation {
  left: 863px;
  top: 31px;
  width: 185px;
  height: 62px;
}

.transformation .float-body {
  gap: 2.300px;
}

.transformation .float-body::before {
  margin-right: 2px;
}

/* bottom */
.bottombar {
  height: 37px;
  display: flex;
  background: linear-gradient(#fff 0, #f4f4ff 4px, #dcdbf4 9px, #d7d6f2 25px, #a5a5b2 34px, #888890 37px);
}

.bottombar .group {
  padding-top: 2px;
}

.standard {
  margin-left: 57px;
  gap: 2.600px;
}

.standard::before {
  margin-right: 1px;
}

.knowledge {
  margin-left: 12px;
  gap: 1.500px;
}

.knowledge::before {
  margin-right: 6px;
}

.fx {
  width: 24px;
  font: italic bold 19px "Liberation Serif", serif;
  white-space: nowrap;
}

.fx small {
  font-size: 11px;
}

.analysis {
  margin-left: 18px;
  gap: 3px;
}

.analysis::before {
  margin-right: 1px;
}

.analysis .wider {
  margin: 0 3px;
}

.structure {
  margin-left: 16px;
  gap: 2.500px;
}

.structure::before {
  margin-right: 2px;
}

.view {
  margin-left: 13px;
  gap: 2.550px;
}

.view::before {
  margin-right: 2px;
}

.ds {
  width: 40px;
  height: 34px;
  margin-left: 14px;
}

.ds text {
  font: italic bold 9.500px "Open Sans", sans-serif;
  fill: #40407a;
}

.statusbar {
  height: 21px;
  display: flex;
  align-items: center;
  background: #d9d8f4;
  border-top: 1px solid #eee;
  border-bottom: 2px solid #aaaab4;
  padding-left: 3px;
}

.statusbar span {
  width: 932px;
  font-size: 10.700px;
}

.powerinput {
  width: 281px;
  height: 18px;
  background: #fff;
}

.statbtn {
  width: 32px;
  height: 18px;
  padding: 1px 8px;
  background: #cfcfdc;
  border-right: 2px solid #888894;
  border-left: 1px solid #fff;
}

.statbtn svg {
  width: 16px;
  height: 16px;
}

.watermark {
  position: absolute;
  left: 433px;
  top: 672px;
  font: 49.100px/54px "Liberation Sans", sans-serif;
  color: rgba(255, 255, 255, .88);
}
```
